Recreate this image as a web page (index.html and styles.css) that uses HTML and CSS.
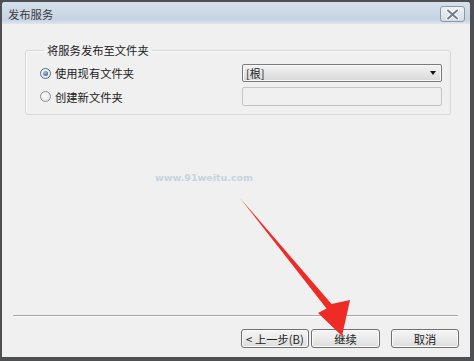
FILE: index.html
```html
<!DOCTYPE html>
<html>
<head>
<meta charset="utf-8">
<link rel="stylesheet" href="styles.css">
</head>
<body>
<div class="window">
  <div class="titlebar">
    <span class="title">发布服务</span>
    <span class="close">
      <svg width="13" height="11" viewBox="0 0 13 11">
        <path d="M2 1.5 L11 9.5 M11 1.5 L2 9.5" stroke="#ffffff" stroke-width="4" stroke-linecap="round"/>
        <path d="M2 1.5 L11 9.5 M11 1.5 L2 9.5" stroke="#6f7c8c" stroke-width="2" stroke-linecap="round"/>
      </svg>
    </span>
  </div>
  <div class="content">
    <fieldset class="group">
      <legend class="legend">将服务发布至文件夹</legend>
      <div class="row first">
        <label class="option"><span class="radio checked"><span class="dot"></span></span>使用现有文件夹</label>
        <div class="select"><span class="select-text">[根]</span><span class="caret"></span></div>
      </div>
      <div class="row">
        <label class="option"><span class="radio"></span>创建新文件夹</label>
        <div class="textbox"></div>
      </div>
    </fieldset>
    <div class="spacer">
      <div class="watermark">www.91weitu.com</div>
    </div>
    <div class="separator"></div>
    <div class="buttons">
      <span class="btn">&lt; 上一步(B)</span>
      <span class="btn next">继续</span>
      <span class="btn cancel">取消</span>
    </div>
  </div>
</div>
<svg class="arrow" width="474" height="361" viewBox="0 0 474 361">
  <polygon points="240,198 331.5,304 350,300 342,336 318,313 326.5,308.5" fill="#ee2b24"/>
</svg>
</body>
</html>
```
FILE: styles.css
```css
html, body {
  margin: 0;
  padding: 0;
}
body {
  width: 474px;
  height: 361px;
  background: #4d4f52;
  position: relative;
  overflow: hidden;
  font-family: "Noto Sans CJK SC", "Noto Sans", sans-serif;
  font-size: 11px;
  color: #222;
}
.window {
  position: absolute;
  left: 2px;
  top: 2px;
  width: 468px;
  height: 355px;
  display: flex;
  flex-direction: column;
  background: #f0f0f0;
  border-radius: 3px 3px 0 0;
  overflow: hidden;
}
.titlebar {
  height: 22px;
  flex: none;
  display: flex;
  align-items: flex-start;
  justify-content: space-between;
  background: linear-gradient(#d5e0ec, #c6d3e3 80%, #dfe6ee);
}
.title {
  margin: 4px 0 0 6px;
  line-height: 16px;
  font-size: 11.3px;
  color: #3b3b3b;
}
.close {
  margin: 4px 5px 0 0;
  width: 23px;
  height: 14px;
  border: 1px solid #8a98aa;
  border-radius: 3px;
  background: linear-gradient(#eef2f6, #d3dce7);
  display: flex;
  align-items: center;
  justify-content: center;
}
.content {
  flex: 1;
  display: flex;
  flex-direction: column;
  padding: 19px 0 9px 0;
}
.group {
  margin: 0 19px 0 23px;
  padding: 0 8px 8px 14px;
  border: 1px solid #d8d8d8;
  border-radius: 3px;
  box-shadow: inset 1px 1px 0 #fafafa;
}
.legend {
  margin-left: 4px;
  padding: 0 3px;
  line-height: 14px;
  font-size: 11.3px;
  color: #222;
}
.row {
  display: flex;
  align-items: center;
  justify-content: space-between;
  margin-top: 5px;
}
.row.first {
  margin-top: 7px;
}
.option {
  display: flex;
  align-items: center;
  font-size: 11.3px;
  line-height: 16px;
}
.radio {
  width: 9px;
  height: 9px;
  border: 1px solid #8e8f8f;
  border-radius: 50%;
  background: radial-gradient(circle at 40% 40%, #ffffff, #dcdcdc);
  margin-right: 4px;
  display: flex;
  align-items: center;
  justify-content: center;
}
.radio.checked {
  border-color: #4a6d8f;
}
.dot {
  width: 5px;
  height: 5px;
  border-radius: 50%;
  background: radial-gradient(circle at 35% 35%, #9fc4e8, #1f4f86);
}
.select {
  width: 198px;
  height: 16px;
  border: 1px solid #7b7b7b;
  border-radius: 2px;
  background: linear-gradient(#f3f3f3, #e6e6e6 50%, #d7d7d7);
  display: flex;
  align-items: center;
  justify-content: space-between;
  box-shadow: inset 0 0 0 1px #f8f8f8;
}
.select-text {
  margin-left: 3px;
  font-size: 11px;
  line-height: 14px;
  color: #222;
}
.caret {
  width: 0;
  height: 0;
  margin-right: 5px;
  border-left: 3px solid transparent;
  border-right: 3px solid transparent;
  border-top: 4px solid #111;
}
.textbox {
  width: 198px;
  height: 17px;
  border: 1px solid #c4c4c4;
  border-radius: 2px;
  background: #f0f0f0;
}
.spacer {
  flex: 1;
}
.watermark {
  margin: 57px 0 0 153px;
  font-family: "DejaVu Sans", sans-serif;
  font-weight: bold;
  font-size: 9.5px;
  line-height: 12px;
  color: #c6d3e2;
}
.separator {
  height: 1px;
  margin: 0 12px 0 11px;
  background: #a8a8a8;
  border-bottom: 1px solid #fcfcfc;
}
.buttons {
  display: flex;
  justify-content: flex-end;
  margin: 12px 11px 0 0;
}
.btn {
  width: 66px;
  height: 17px;
  border: 1px solid #707070;
  border-radius: 3px;
  background: linear-gradient(#f4f4f4, #ebebeb 50%, #dcdcdc);
  box-shadow: inset 0 0 0 1px #fbfbfb;
  display: flex;
  align-items: center;
  justify-content: center;
  font-size: 11.3px;
  line-height: 14px;
  color: #222;
}
.btn.next {
  width: 67px;
  margin-left: 2px;
}
.btn.cancel {
  margin-left: 11px;
}
.arrow {
  position: absolute;
  left: 0;
  top: 0;
  pointer-events: none;
}
```
